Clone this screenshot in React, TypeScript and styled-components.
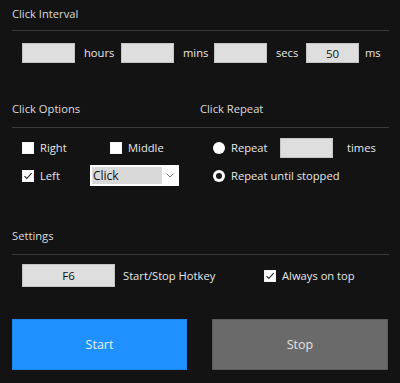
import React from "react";
import styled, { createGlobalStyle } from "styled-components";

const GlobalStyle = createGlobalStyle`
  html, body { margin: 0; padding: 0; background: #131313; }
  body {
    font-family: "Open Sans", "Segoe UI", Lato, sans-serif;
    font-size: 11.2px;
    color: #e6e6e6;
  }
  #root { width: 400px; height: 383px; }
`;

const Page = styled.div`
  box-sizing: border-box;
  width: 400px;
  height: 383px;
  padding: 0 11px 0 12px;
  overflow: hidden;
`;

const Header = styled.div<{ $top: number; $bottom: number }>`
  padding-top: ${(p) => p.$top}px;
  padding-bottom: ${(p) => p.$bottom}px;
  line-height: 16px;
  color: #dcdcdc;
  border-bottom: 1px solid #3b3b3b;
  white-space: nowrap;
`;

const Row = styled.div<{ $mt: number; $h: number; $pl: number }>`
  display: flex;
  align-items: center;
  margin-top: ${(p) => p.$mt}px;
  height: ${(p) => p.$h}px;
  padding-left: ${(p) => p.$pl}px;
  white-space: nowrap;
`;

const Field = styled.div<{ $w: number; $h: number }>`
  box-sizing: border-box;
  width: ${(p) => p.$w}px;
  height: ${(p) => p.$h}px;
  background: #dedede;
  border: 1px solid #c4c4c4;
  color: #111;
  font-size: 11.5px;
  display: flex;
  align-items: center;
  justify-content: center;
  flex: none;
`;

const Label = styled.span<{ $ml?: number; $w?: number }>`
  margin-left: ${(p) => p.$ml ?? 0}px;
  ${(p) => (p.$w ? `width: ${p.$w}px; flex: none;` : "")}
  color: #e6e6e6;
  line-height: 16px;
`;

const Columns = styled.div`
  display: grid;
  grid-template-columns: 188px 1fr;
`;

const Column = styled.div``;

const Item = styled.div<{ $w?: number }>`
  display: flex;
  align-items: center;
  gap: 6px;
  ${(p) => (p.$w ? `width: ${p.$w}px;` : "")}
  flex: none;
`;

const Box = styled.span`
  box-sizing: border-box;
  width: 12px;
  height: 12px;
  background: #fff;
  border: 1px solid #f2f2f2;
  display: inline-flex;
  align-items: center;
  justify-content: center;
  flex: none;
`;

const Radio = styled.span<{ $on?: boolean }>`
  box-sizing: border-box;
  width: 12px;
  height: 12px;
  border-radius: 50%;
  background: #fff;
  display: inline-flex;
  align-items: center;
  justify-content: center;
  flex: none;
  &::after {
    content: "";
    display: ${(p) => (p.$on ? "block" : "none")};
    width: 6px;
    height: 6px;
    border-radius: 50%;
    background: #1a1a1a;
  }
`;

const Select = styled.div`
  box-sizing: border-box;
  width: 89px;
  height: 21px;
  background: #fff;
  padding: 2px;
  display: flex;
  align-items: stretch;
  flex: none;
`;

const SelectValue = styled.div`
  width: 69px;
  background: #d9d9d9;
  color: #111;
  font-size: 12px;
  display: flex;
  align-items: center;
  padding-left: 1px;
`;

const SelectArrow = styled.div`
  flex: 1;
  display: flex;
  align-items: center;
  justify-content: center;
`;

const Buttons = styled.div`
  display: grid;
  grid-template-columns: 175px 176px;
  column-gap: 25px;
  margin-top: 32px;
`;

const Button = styled.div<{ $primary?: boolean }>`
  box-sizing: border-box;
  height: 51px;
  display: flex;
  align-items: center;
  justify-content: center;
  font-size: 12.5px;
  background: ${(p) => (p.$primary ? "#1e90ff" : "#6a6a6a")};
  border: 1px solid ${(p) => (p.$primary ? "#1c84ea" : "#5c5c5c")};
  color: ${(p) => (p.$primary ? "#e6f0fb" : "#e2e2e2")};
`;

const Check = () => (
  <svg width="10" height="10" viewBox="0 0 10 10">
    <polyline points="1.5,5.2 3.8,7.5 8.6,2.2" fill="none" stroke="#222" strokeWidth="1.1" />
  </svg>
);

const CheckBox = ({ checked }: { checked?: boolean }) => <Box>{checked ? <Check /> : null}</Box>;

export default function App() {
  return (
    <>
      <GlobalStyle />
      <Page>
        <Header $top={6} $bottom={8}>Click Interval</Header>
        <Row $mt={12} $h={20} $pl={10}>
          <Field $w={53} $h={20} />
          <Label $ml={9} $w={37}>hours</Label>
          <Field $w={53} $h={20} />
          <Label $ml={9} $w={31}>mins</Label>
          <Field $w={53} $h={20} />
          <Label $ml={9} $w={30}>secs</Label>
          <Field $w={53} $h={20}>50</Field>
          <Label $ml={6}>ms</Label>
        </Row>

        <Columns>
          <Column>
            <Header $top={38} $bottom={10}>Click Options</Header>
            <Row $mt={10} $h={20} $pl={10}>
              <Item $w={88}>
                <CheckBox />
                <Label>Right</Label>
              </Item>
              <Item>
                <CheckBox />
                <Label>Middle</Label>
              </Item>
            </Row>
            <Row $mt={7} $h={21} $pl={10}>
              <Item $w={68}>
                <CheckBox checked />
                <Label>Left</Label>
              </Item>
              <Select>
                <SelectValue>Click</SelectValue>
                <SelectArrow>
                  <svg width="8" height="5" viewBox="0 0 8 5">
                    <polyline points="0.5,0.5 4,4 7.5,0.5" fill="none" stroke="#777" strokeWidth="1" />
                  </svg>
                </SelectArrow>
              </Select>
            </Row>
          </Column>
          <Column>
            <Header $top={38} $bottom={10}>Click Repeat</Header>
            <Row $mt={10} $h={20} $pl={13}>
              <Item $w={67}>
                <Radio />
                <Label>Repeat</Label>
              </Item>
              <Field $w={53} $h={20} />
              <Label $ml={14}>times</Label>
            </Row>
            <Row $mt={7} $h={21} $pl={13}>
              <Item>
                <Radio $on />
                <Label>Repeat until stopped</Label>
              </Item>
            </Row>
          </Column>
        </Columns>

        <Header $top={42} $bottom={10}>Settings</Header>
        <Row $mt={9} $h={23} $pl={10}>
          <Field $w={93} $h={23}>F6</Field>
          <Label $ml={8} $w={141}>Start/Stop Hotkey</Label>
          <Item>
            <CheckBox checked />
            <Label>Always on top</Label>
          </Item>
        </Row>

        <Buttons>
          <Button $primary>Start</Button>
          <Button>Stop</Button>
        </Buttons>
      </Page>
    </>
  );
}
